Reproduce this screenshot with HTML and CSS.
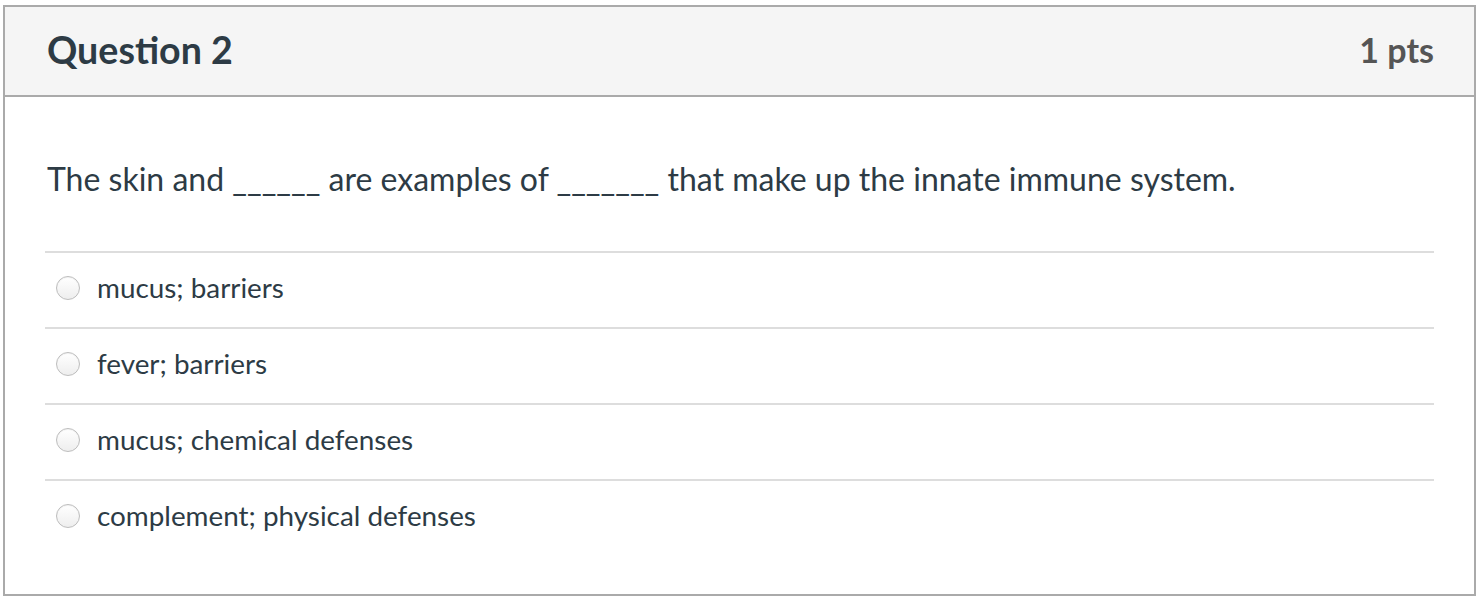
FILE: index.html
```html
<!DOCTYPE html>
<html lang="en">
<head>
<meta charset="utf-8">
<title>Question 2</title>
<link rel="stylesheet" href="styles.css">
</head>
<body>
<div class="question">
  <div class="header">
    <h2 class="title">Question 2</h2>
    <div class="points">1 pts</div>
  </div>
  <div class="content">
    <p class="prompt">The skin and ______ are examples of _______ that make up the innate immune system.</p>
    <div class="answers">
      <label class="answer"><span class="radio"></span><span class="text">mucus; barriers</span></label>
      <label class="answer"><span class="radio"></span><span class="text">fever; barriers</span></label>
      <label class="answer"><span class="radio"></span><span class="text">mucus; chemical defenses</span></label>
      <label class="answer"><span class="radio"></span><span class="text">complement; physical defenses</span></label>
    </div>
  </div>
</div>
</body>
</html>
```
FILE: styles.css
```css
html, body { margin: 0; background: #fff; }
body {
  padding: 5px 4px 0 3px;
  font-family: Lato, "Noto Sans", sans-serif;
  color: #2d3b45;
}
.question {
  border: 2px solid #aaaaaa;
  height: 587px;
  box-sizing: content-box;
}
.header {
  background: #f5f5f5;
  border-bottom: 2px solid #aaaaaa;
  height: 88px;
  display: flex;
  align-items: center;
  justify-content: space-between;
  padding: 0 40px 0 42px;
}
.title {
  margin: 0 0 3px;
  font-size: 37.6px;
  font-weight: 700;
  color: #2d3b45;
}
.points {
  font-size: 34px;
  font-weight: 700;
  color: #555555;
  margin-bottom: 3px;
}
.content {
  padding: 0 40px;
}
.prompt {
  margin: 0;
  padding-top: 63px;
  height: 91px;
  font-size: 32px;
  line-height: 38px;
  padding-left: 2px;
}
.answers { display: flex; flex-direction: column; }
.answer {
  display: flex;
  align-items: center;
  border-top: 2px solid #dddddd;
  height: 74px;
  padding-left: 11px;
  box-sizing: content-box;
}
.radio {
  width: 22px;
  height: 22px;
  border-radius: 50%;
  border: 1px solid #bdbdbd;
  background: linear-gradient(#ffffff, #eeeeee);
  box-shadow: inset 0 1px 1px rgba(0,0,0,0.05);
  flex: none;
  margin-bottom: 4px;
}
.text {
  margin-left: 17px;
  font-size: 27.85px;
  margin-bottom: 6px;
}
```
